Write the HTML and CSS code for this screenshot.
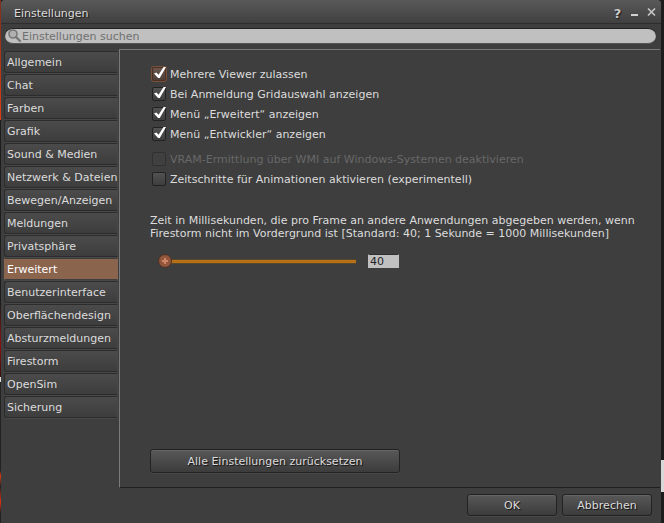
FILE: index.html
```html
<!DOCTYPE html>
<html lang="de">
<head>
  <meta charset="UTF-8">
  <meta name="viewport" content="width=device-width, initial-scale=1.0">
  <title>Einstellungen</title>
  <link rel="stylesheet" href="styles.css">
</head>
<body>
  <div class="window">
    <header class="titlebar">
      <h1>Einstellungen</h1>
      <button class="title-btn help" aria-label="Hilfe">?</button>
      <button class="title-btn" aria-label="Minimieren">
        <svg width="9" height="12" viewBox="0 0 9 12"><path d="M1 7H8V9H1Z" fill="#d0d0d0"/></svg>
      </button>
      <button class="title-btn" aria-label="Schließen">
        <svg width="9" height="12" viewBox="0 0 9 12"><path d="M1 1.5L8 8.5M8 1.5L1 8.5" stroke="#c8c8c8" stroke-width="1.6"/></svg>
      </button>
    </header>

    <div class="search">
      <svg width="15" height="14" viewBox="0 0 15 14">
        <circle cx="6" cy="5" r="4" fill="#b0b0b0" stroke="#777" stroke-width="1.6"/>
        <path d="M9 8L13 12" stroke="#777" stroke-width="2.4" stroke-linecap="round"/>
      </svg>
      <input type="text" placeholder="Einstellungen suchen" aria-label="Einstellungen suchen">
    </div>

    <div class="main">
      <nav class="tabs">
        <button class="tab">Allgemein</button>
        <button class="tab">Chat</button>
        <button class="tab">Farben</button>
        <button class="tab">Grafik</button>
        <button class="tab">Sound &amp; Medien</button>
        <button class="tab">Netzwerk &amp; Dateien</button>
        <button class="tab">Bewegen/Anzeigen</button>
        <button class="tab">Meldungen</button>
        <button class="tab">Privatsphäre</button>
        <button class="tab active">Erweitert</button>
        <button class="tab">Benutzerinterface</button>
        <button class="tab">Oberflächendesign</button>
        <button class="tab">Absturzmeldungen</button>
        <button class="tab">Firestorm</button>
        <button class="tab">OpenSim</button>
        <button class="tab">Sicherung</button>
      </nav>

      <section class="panel">
        <div class="checks">
          <label class="check focused"><input type="checkbox" checked>Mehrere Viewer zulassen</label>
          <label class="check"><input type="checkbox" checked>Bei Anmeldung Gridauswahl anzeigen</label>
          <label class="check"><input type="checkbox" checked>Menü „Erweitert“ anzeigen</label>
          <label class="check"><input type="checkbox" checked>Menü „Entwickler“ anzeigen</label>
        </div>
        <div class="checks">
          <label class="check disabled"><input type="checkbox" disabled>VRAM-Ermittlung über WMI auf Windows-Systemen deaktivieren</label>
          <label class="check"><input type="checkbox">Zeitschritte für Animationen aktivieren (experimentell)</label>
        </div>

        <label class="hint" for="yield-time">Zeit in Millisekunden, die pro Frame an andere Anwendungen abgegeben werden, wenn Firestorm nicht im Vordergrund ist [Standard: 40; 1 Sekunde = 1000 Millisekunden]</label>
        <div class="slider-row">
          <input type="range" id="yield-time" min="40" max="1000" value="40">
          <input type="text" class="value" value="40" aria-label="Millisekunden">
        </div>

        <button class="btn reset">Alle Einstellungen zurücksetzen</button>
      </section>
    </div>

    <footer class="footer">
      <button class="btn">OK</button>
      <button class="btn">Abbrechen</button>
    </footer>
  </div>
</body>
</html>
```

FILE: styles.css
```css
* {
  box-sizing: border-box;
}
body {
  margin: 0;
  padding: 0 3px 0 1px;
  min-height: 100vh;
  display: flex;
  /* slivers of the world view left and right of the window */
  background:
    linear-gradient(#1c1c1c 88%, #d8d8d8 88%, #d8d8d8 94%, #1c1c1c 94%) right / 3px 100% no-repeat,
    linear-gradient(#7a3020 0%, #e03c10 23%, #1c1c1c 23%, #1c1c1c 58%, #8c1010 66%, #3a1010 72%, #ddd 72%, #ddd 73%, #222 73%, #222 90%, #e03c10 91%, #222 93%, #e03010 96%, #222 98%) left / 1px 100% no-repeat,
    #1c1c1c;
  font-family: "DejaVu Sans", sans-serif;
  font-size: 11px;
  line-height: 13px;
  color: #dcdcdc;
}
button,
input {
  font: inherit;
  color: inherit;
}
.window {
  flex: 1;
  display: flex;
  flex-direction: column;
  background: #3e3e3e;
  border-radius: 4px 4px 0 0;
  overflow: hidden;
}

.titlebar {
  display: flex;
  align-items: center;
  gap: 4px;
  height: 24px;
  padding: 3px 3px 0 13px;
  background: linear-gradient(#595959, #404040);
  border-bottom: 1px solid #2e2e2e;
}
.titlebar h1 {
  flex: 1;
  margin: 0;
  font-size: 11px;
  font-weight: normal;
  text-shadow: 1px 1px 1px #1a1a1a;
}
.title-btn {
  display: flex;
  justify-content: center;
  width: 13px;
  padding: 0;
  border: none;
  background: none;
}
.title-btn.help {
  font-size: 13px;
  font-weight: bold;
  color: #c8c8c8;
  text-shadow: 1px 1px 1px #1a1a1a;
}

.search {
  display: flex;
  align-items: center;
  height: 16px;
  margin: 4px 5px 5px 4px;
  padding-left: 2px;
  background: #c0c0c0;
  border-top: 1px solid #222;
  border-bottom: 1px solid #555;
  border-radius: 8px;
}
.search input {
  flex: 1;
  padding: 0;
  border: none;
  outline: none;
  background: none;
}
.search input::placeholder {
  color: #707070;
}

.main {
  flex: 1;
  display: flex;
}
.tabs {
  width: 118px;
  padding: 2px 1px 0 3px;
}
.tab {
  display: block;
  width: 100%;
  height: 22px;
  margin-bottom: 1px;
  padding: 0 0 0 2px;
  border: 1px solid #2c2c2c;
  border-right-color: #484848;
  border-radius: 3px 0 0 3px;
  background: linear-gradient(#4b4b4b, #3d3d3d);
  box-shadow: 0 1px #484848;
  text-align: left;
  white-space: nowrap;
}
.tab.active {
  background: #8b644e;
  border-color: #3e3e3e #8b644e;
  border-radius: 0;
  color: #fff;
}

.panel {
  flex: 1;
  display: flex;
  flex-direction: column;
  margin-right: 1px;
  padding: 14px 20px 14px 30px;
  border: 1px solid #7a7a7a;
  border-width: 1px 0 1px 1px;
  border-bottom-color: #202020;
}
.checks {
  margin-bottom: 5px;
}
.check {
  display: flex;
  align-items: center;
  gap: 4px;
  height: 20px;
  padding-left: 2px;
}
.check input {
  appearance: none;
  position: relative;
  width: 14px;
  height: 14px;
  margin: 0;
  border: 1px solid #222;
  border-radius: 2px;
  background: linear-gradient(#525252, #3e3e3e);
}
.check input:checked::after {
  content: "";
  position: absolute;
  left: 1px;
  top: -1px;
  width: 12px;
  height: 11px;
  background: #fff;
  clip-path: polygon(0 58%, 20% 50%, 38% 70%, 80% 0, 100% 0, 48% 100%, 34% 100%);
}
.check.focused input {
  border-color: #4c3024;
  background: linear-gradient(#6a564c, #4e4039);
  box-shadow: 0 0 0 1px #795039;
}
.check.disabled {
  color: #686868;
}
.check.disabled input {
  border-color: #303030;
  background: #404040;
}
.hint {
  margin-top: 20px;
}
.slider-row {
  display: flex;
  align-items: center;
  gap: 12px;
  margin-top: 14px;
  padding-left: 8px;
}
.slider-row input[type="range"] {
  appearance: none;
  width: 198px;
  height: 14px;
  margin: 0;
  background: linear-gradient(#b87014, #b87014) right center / 190px 3px no-repeat,
    linear-gradient(#594830, #594830) right center / 190px 5px no-repeat;
}
.slider-row input[type="range"]::-webkit-slider-thumb {
  appearance: none;
  width: 14px;
  height: 14px;
  border: 1px solid #4c2e20;
  border-radius: 50%;
  background:
    linear-gradient(#ce8767, #ce8767) center / 6px 2px no-repeat,
    linear-gradient(#ce8767, #ce8767) center / 2px 6px no-repeat,
    #91563c;
}
.value {
  width: 31px;
  height: 14px;
  padding: 0 1px;
  border: 1px solid #c0c0c0;
  border-top-color: #303030;
  background: #c0c0c0;
  color: #222;
}

.btn {
  width: 90px;
  height: 22px;
  padding: 0;
  border: 1px solid #222;
  border-radius: 3px;
  background: linear-gradient(#585858, #3c3c3c);
  box-shadow: inset 0 1px #656565, 0 1px #484848;
  text-shadow: 1px 1px 1px #111;
}
.btn.reset {
  width: 250px;
  height: 24px;
  margin-top: auto;
}
.footer {
  display: flex;
  justify-content: flex-end;
  gap: 5px;
  padding: 6px 9px 7px;
}
```
